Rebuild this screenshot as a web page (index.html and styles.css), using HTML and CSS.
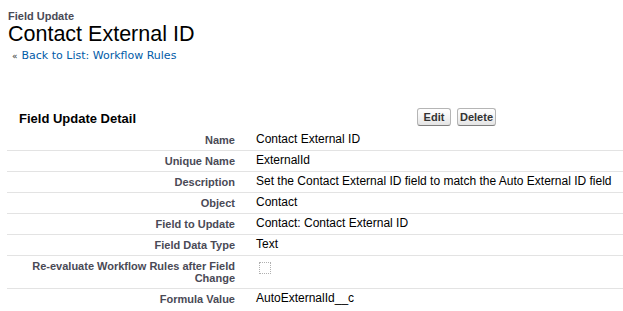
FILE: index.html
```html
<!DOCTYPE html>
<html>
<head>
<meta charset="utf-8">
<link rel="stylesheet" href="styles.css">
</head>
<body>
<div class="page">
  <div class="bPageTitle">
    <div class="pageType">Field Update</div>
    <h1 class="pageDescription">Contact External ID</h1>
    <div class="ptBreadcrumb"><span class="raquo">«</span><a href="#">Back to List: Workflow Rules</a></div>
  </div>

  <div class="detailBlock">
    <div class="pbHeader">
      <h2 class="pbTitle">Field Update Detail</h2>
      <div class="pbButton">
        <button class="btn btnEdit">Edit</button>
        <button class="btn btnDelete">Delete</button>
      </div>
    </div>
    <div class="detailList">
      <div class="row"><div class="labelCol">Name</div><div class="dataCol">Contact External ID</div></div>
      <div class="row"><div class="labelCol">Unique Name</div><div class="dataCol">ExternalId</div></div>
      <div class="row"><div class="labelCol">Description</div><div class="dataCol">Set the Contact External ID field to match the Auto External ID field</div></div>
      <div class="row"><div class="labelCol">Object</div><div class="dataCol">Contact</div></div>
      <div class="row"><div class="labelCol">Field to Update</div><div class="dataCol">Contact: Contact External ID</div></div>
      <div class="row"><div class="labelCol">Field Data Type</div><div class="dataCol">Text</div></div>
      <div class="row"><div class="labelCol">Re-evaluate Workflow Rules after Field Change</div><div class="dataCol"><span class="checkbox"></span></div></div>
      <div class="row last"><div class="labelCol">Formula Value</div><div class="dataCol">AutoExternalId__c</div></div>
    </div>
  </div>
</div>
</body>
</html>
```

FILE: styles.css
```css
html, body {
  margin: 0;
  padding: 0;
  background: #ffffff;
}

body {
  font-family: "Liberation Sans", Arial, sans-serif;
  color: #000;
  overflow: hidden;
}

.page {
  padding: 11px 0 0 0;
}

.bPageTitle {
  padding-left: 8px;
}

.pageType {
  font-size: 11px;
  font-weight: bold;
  color: #4a4a56;
  line-height: 11px;
}

.pageDescription {
  margin: 0;
  font-size: 21.5px;
  font-weight: normal;
  line-height: 24px;
  color: #000;
}

.ptBreadcrumb {
  margin-top: 3px;
  padding-left: 4px;
  font-family: "DejaVu Sans", Verdana, sans-serif;
  font-size: 11px;
  line-height: 14px;
  color: #333;
}

.raquo {
  font-size: 9px;
  margin-right: 4px;
}

.ptBreadcrumb a {
  color: #015ba7;
  text-decoration: none;
}

.detailBlock {
  margin-top: 44px;
  margin-left: 7px;
}

.pbHeader {
  display: grid;
  grid-template-columns: 410px auto;
  align-items: center;
  height: 23px;
}

.pbTitle {
  margin: 0;
  padding-left: 12px;
  font-size: 13px;
  font-weight: bold;
  color: #000;
}

.pbButton {
  display: flex;
  gap: 6px;
  align-self: start;
  margin-top: 1px;
}

.btn {
  font-family: "Liberation Sans", Arial, sans-serif;
  font-size: 11px;
  font-weight: bold;
  color: #333;
  padding: 0;
  height: 18px;
  border: 1px solid #b5b5b5;
  border-bottom-color: #7f7f7f;
  border-radius: 3px;
  background: linear-gradient(#ffffff, #f4f4f4 50%, #e4e4e4);
  line-height: 13px;
}

.btnEdit {
  width: 34px;
}

.btnDelete {
  width: 39px;
}

.row {
  display: grid;
  grid-template-columns: 238px 1fr;
  border-bottom: 1px solid #e3e3e3;
}

.row.last {
  border-bottom: none;
}

.labelCol {
  padding: 4px 10px 4px 2px;
  text-align: right;
  font-size: 11px;
  font-weight: bold;
  color: #4a4a56;
  line-height: 12px;
}

.dataCol {
  padding: 3px 0 4px 11px;
  font-size: 12px;
  line-height: 13px;
  color: #000;
}

.checkbox {
  display: inline-block;
  width: 10px;
  height: 10px;
  margin-top: 3px;
  margin-left: 3px;
  border: 1px dotted #b0b0b0;
}
```
